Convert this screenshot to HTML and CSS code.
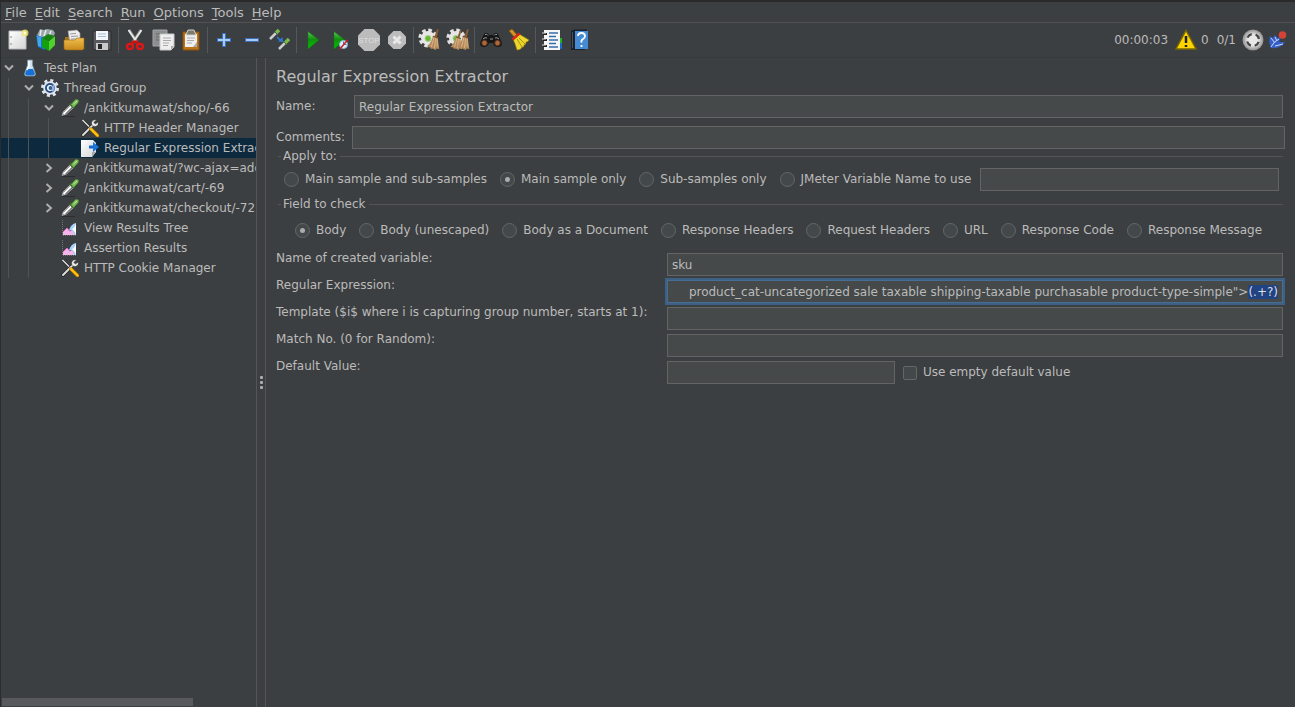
FILE: index.html
```html
<!DOCTYPE html>
<html lang="en">
<head>
<meta charset="utf-8">
<title>Regular Expression Extractor</title>
<link rel="stylesheet" href="styles.css">
</head>
<body>
<svg class="defs" aria-hidden="true">
  <defs>
    <linearGradient id="green" x1="0" y1="0" x2="0" y2="1"><stop offset="0" stop-color="#5cc85a"/><stop offset=".45" stop-color="#12900f"/><stop offset="1" stop-color="#00c800"/></linearGradient>
    <linearGradient id="paper" x1="0" y1="0" x2="1" y2="1"><stop offset="0" stop-color="#fff"/><stop offset="1" stop-color="#d4d4d4"/></linearGradient>
    <linearGradient id="gold" x1="0" y1="0" x2="0" y2="1"><stop offset="0" stop-color="#f0c050"/><stop offset="1" stop-color="#c98a1c"/></linearGradient>
    <radialGradient id="orb"><stop offset=".5" stop-color="#e8e8e8"/><stop offset="1" stop-color="#8d8d8d"/></radialGradient>
  </defs>
  <symbol id="down" viewBox="0 0 10 8"><path d="M1 1.500 5 5.500 9 1.500" fill="none" stroke="#adadad" stroke-width="2"/></symbol>
  <symbol id="right" viewBox="0 0 8 10"><path d="M1.500 1 6 5 1.500 9" fill="none" stroke="#adadad" stroke-width="2"/></symbol>
  <symbol id="pipette" viewBox="0 0 18 18">
    <path d="M1 17.500h13" stroke="#2b2d2e"/>
    <path d="M1 16.500 2.500 12.500 9.500 5.500 12.500 8.500 5.500 15Z" fill="#666" stroke="#bbb" stroke-width=".8"/>
    <path d="M2.500 15 10 7.500" stroke="#fff" stroke-width="1.800"/>
    <path d="M9 4.500 13.500 9" stroke="#356b25" stroke-width="2"/>
    <path d="M10 5.500 14.500.500q2.500-.5 3 1 .5 1.500-1 3L12.500 8.500Z" fill="#7abb55" stroke="#4a8c32" stroke-width=".6"/>
    <path d="m12.500 5 3.500-3" stroke="#c4e8a4"/>
  </symbol>
  <symbol id="tools" viewBox="0 0 18 18">
    <path d="M2 1.500 10 9.500" stroke="#222" stroke-width="2.600"/><path d="M1.500 1 10 9.500" stroke="#e2e2e2" stroke-width="1.400"/>
    <path d="m2 16 9-9" stroke="#222" stroke-width="3.400" stroke-linecap="round"/>
    <path d="m2 16 9-9" stroke="#ddd" stroke-width="2" stroke-linecap="round"/>
    <path d="M15.500 1q-4-1-5 2.500L11 7l3.500.5Q18 6.500 17 3l-2.500 2-1.800-1.500Z" fill="#eee" stroke="#333" stroke-width=".5"/>
    <path d="m10 10 7 7" stroke="#b97800" stroke-width="3.400" stroke-linecap="round"/><path d="m10 10 6.500 6.500" stroke="#ffc40c" stroke-width="2.200" stroke-linecap="round"/>
  </symbol>
  <symbol id="chart" viewBox="0 0 18 18">
    <path d="M1.500 1v15.500H16" fill="none" stroke="#707274" stroke-dasharray="1 1"/>
    <path d="M2 16v-3l4-4 3 3 3-1 3 5Z" fill="#f5b4ea"/><path d="M2 13 6 9l3 3.500" fill="none" stroke="#d76cbc"/>
    <path d="M8 11q2-6 7-7v12h-2l-1-4Z" fill="#a9d0fb"/><path d="M11 10q3-1 4-6v12q-1-4-4-6Z" fill="#fff"/>
  </symbol>
  <symbol id="gear" viewBox="0 0 24 24">
    <circle cx="10" cy="12" r="7.500" fill="none" stroke="#e3e3e3" stroke-width="4" stroke-dasharray="3.400 2.500"/><circle cx="10" cy="12" r="7" fill="#e6e6e6"/><circle cx="10" cy="12.500" r="3" fill="#69b832" stroke="#a9cf8a"/>
  </symbol>
  <symbol id="broom" viewBox="0 0 12 20">
    <path d="M9.500 0 11 .5 9 8 7 7Z" fill="#8c5c32"/><path d="M5.500 6.500 10 8l1.500 11-2.500-.5-1 1.500-3-1.500-1.500.5-.5-1.500-3-.5Q4.500 12 5.500 6.500Z" fill="#b58a5c"/>
    <path d="M6.500 8 4 17M8 9l-1 9M9.500 9v8" stroke="#e0bd8d" stroke-width=".8"/><path d="m5.500 7 5 1.500" stroke="#7a4f28"/>
  </symbol>
</svg>

<div class="app">
  <nav class="menubar" aria-label="Main menu">
    <button class="menu" type="button"><u>F</u>ile</button>
    <button class="menu" type="button"><u>E</u>dit</button>
    <button class="menu" type="button"><u>S</u>earch</button>
    <button class="menu" type="button"><u>R</u>un</button>
    <button class="menu" type="button"><u>O</u>ptions</button>
    <button class="menu" type="button"><u>T</u>ools</button>
    <button class="menu" type="button"><u>H</u>elp</button>
  </nav>

  <header class="toolbar">
    <button class="tool" type="button" aria-label="New"><svg viewBox="0 0 24 24"><path d="M3 3h17v18H3Z" fill="url(#paper)" stroke="#bbb"/><path d="M5 8v2M5 15v2" stroke="#888"/><circle cx="19" cy="5" r="3.500" fill="#f3e76c" opacity=".8"/><circle cx="19" cy="5" r="1.500" fill="#fffde0"/></svg></button>
    <button class="tool" type="button" aria-label="Templates"><svg viewBox="0 0 24 24"><path d="M3 7 6 1l4 1 3-1 6 1 2 3-2 5H5Z" fill="#9aa6ab"/><path d="M7 2 6 8M12 2l-2 6M17 3l-2 5" stroke="#e6eef0" stroke-width="1.500"/><path d="m2 7 9 3v12l-7-3Z" fill="#1676c8"/><path d="m3 8 4 1v10l-3-1Z" fill="#43a6ec"/><path d="m8 10 7 3v10l-7-4Z" fill="#16a010"/><path d="m15 13 6-5v9l-6 6Z" fill="#4fd32c"/><path d="m8 10 6-4 7 2-6 5Z" fill="#168211"/></svg></button>
    <button class="tool" type="button" aria-label="Open"><svg viewBox="0 0 24 24"><path d="M3 9h8l2 2h9v9H3Z" fill="#a87418"/><path d="m6 3 9-1 3 3v10H8Z" fill="#eee" stroke="#999" stroke-width=".7"/><path d="m8 6 6-.6M9 8.500l7-.5M9 11h7" stroke="#999"/><path d="M2 12h11l2-2h7v11l-2 1H4l-2-1Z" fill="url(#gold)" stroke="#9b6812" stroke-width=".6"/></svg></button>
    <button class="tool" type="button" aria-label="Save"><svg viewBox="0 0 24 24"><path d="M3 3h18v19H4l-1-1Z" fill="#56585d" stroke="#2c2d30"/><path d="M6 3h12v9H6Z" fill="#f4f7fa"/><path d="M8 6h8M8 8.500h8" stroke="#a5bdd6"/><path d="M6 15h12v7H6Z" fill="#c8c8c8"/><path d="M8 16h4v5H8Z" fill="#24262a"/></svg></button>
    <span class="sep"></span>
    <button class="tool" type="button" aria-label="Cut"><svg viewBox="0 0 24 24"><path d="m6 2 9 14M18 2 9 16" stroke="#909090" stroke-width="3"/><path d="m5.500 2 9 13M18.500 2l-9 13" stroke="#eee" stroke-width="1.500"/><path d="m12 13 4 3M12 13l-4 3" stroke="#c51212" stroke-width="3"/><ellipse cx="7" cy="18.500" rx="3" ry="2.500" fill="none" stroke="#e01515" stroke-width="2.300"/><ellipse cx="17" cy="18.500" rx="3" ry="2.500" fill="none" stroke="#e01515" stroke-width="2.300"/></svg></button>
    <button class="tool" type="button" aria-label="Copy"><svg viewBox="0 0 24 24"><path d="M2 2h14v16H2Z" fill="#8c8f90" stroke="#a2a4a5"/><path d="M5 6h8M5 9h7M5 12h5" stroke="#66696a"/><path d="M9 6h14v13l-3 3H9Z" fill="#eee" stroke="#c8c8c8"/><path d="M12 10h8M12 12.500h8M12 15h6M12 17.500h5" stroke="#aaa"/><path d="m20 22 3-4h-3Z" fill="#aaa"/></svg></button>
    <button class="tool" type="button" aria-label="Paste"><svg viewBox="0 0 24 24"><path d="M4 4h16v18H4Z" fill="#ba741a" stroke="#8a5109"/><path d="M6 6h12v13H6Z" fill="#efefef"/><path d="m14 19 4-5v5Z" fill="#aaa"/><path d="M8 10h8M8 12.500h7M8 15h5" stroke="#aaa"/><path d="M9 2h6l2 5H7Z" fill="#777b70" stroke="#d0d0c8"/></svg></button>
    <span class="sep"></span>
    <button class="tool" type="button" aria-label="Expand all"><svg viewBox="0 0 24 24"><path d="M12 5v14M5 12h14" stroke="#3b6fb8" stroke-width="4"/><path d="M12 6v12M6 12h12" stroke="#a8cbf4" stroke-width="2"/></svg></button>
    <button class="tool" type="button" aria-label="Collapse all"><svg viewBox="0 0 24 24"><path d="M5 12h14" stroke="#3b6fb8" stroke-width="4"/><path d="M6 12h12" stroke="#a8cbf4" stroke-width="2"/></svg></button>
    <button class="tool" type="button" aria-label="Toggle"><svg viewBox="0 0 24 24"><path d="m2 11 6-6M11 21l6-6" stroke="#ccc" stroke-width="2.500"/><path d="m8 5 3-3M17 15l4-4" stroke="#79b94e" stroke-width="3.500"/><path d="m7 4 3 3M15 13l4 4" stroke="#3e6b29"/><path d="m9 9 3 3" stroke="#2f79d8" stroke-width="1.600"/><path d="m14.500 9 .5 5-5-.5Z" fill="#2f79d8"/></svg></button>
    <span class="sep"></span>
    <button class="tool" type="button" aria-label="Start"><svg viewBox="0 0 24 24"><path d="M7 3.500 18 12 7 21Z" fill="url(#green)" stroke="#0b750b" stroke-width=".5"/></svg></button>
    <button class="tool" type="button" aria-label="Start no pauses"><svg viewBox="0 0 24 24"><path d="M5 3.500 16 12 5 21Z" fill="url(#green)" stroke="#0b750b" stroke-width=".5"/><circle cx="14.500" cy="16.500" r="4" fill="#e2efff" stroke="#8fb2d7"/><path d="M14.500 16.500v-3M14.500 16.500h3" stroke="#3d75b5"/><path d="m11 21 7.500-9" stroke="#d02020" stroke-width="1.500"/></svg></button>
    <button class="tool" type="button" aria-label="Stop" disabled><svg viewBox="0 0 24 24"><path d="M7.500 1h9L23 7.500v9L16.500 23h-9L1 16.500v-9Z" fill="#bcbcbc"/><text x="12" y="15" class="stop" text-anchor="middle">STOP</text></svg></button>
    <button class="tool" type="button" aria-label="Shutdown" disabled><svg viewBox="0 0 24 24"><path d="M8.500 3h7L21 8.500v7L15.500 21h-7L3 15.500v-7Z" fill="#bcbcbc"/><path d="m8.500 8.500 7 7M15.500 8.500l-7 7" stroke="#e8e8e8" stroke-width="3"/></svg></button>
    <span class="sep"></span>
    <button class="tool" type="button" aria-label="Clear"><svg viewBox="0 0 24 24"><use href="#gear" x="0" y="-2" width="24" height="24"/><use href="#broom" x="9" y="1" width="13" height="21"/></svg></button>
    <button class="tool" type="button" aria-label="Clear all"><svg viewBox="0 0 24 24"><use href="#gear" x="0" y="-2" width="24" height="24"/><use href="#broom" x="4" y="2" width="13" height="20"/><use href="#broom" x="11" y="1" width="13" height="21"/></svg></button>
    <span class="sep"></span>
    <button class="tool" type="button" aria-label="Search tree"><svg viewBox="0 0 24 24"><path d="M5 6q3-3 5 1h4q2-4 5-1l4 9q0 4-4 4t-5-4h-4q-1 4-5 4t-4-4Z" fill="#171717"/><path d="M6 6.500q2-1 3 1M15 7.500q1-2 3-1M11 11h3M4 11q2-2 4-1M16 10q2-1 4 1" fill="none" stroke="#999"/><circle cx="5.500" cy="15" r="2.700" fill="#b0673a" stroke="#5f3723"/><circle cx="18.500" cy="15" r="2.700" fill="#b0673a" stroke="#5f3723"/></svg></button>
    <button class="tool" type="button" aria-label="Reset search"><svg viewBox="0 0 24 24"><path d="m2 3 3-2 6 7-3 2Z" fill="#d29322" stroke="#7d5212" stroke-width=".7"/><path d="m6 11 6-5 10 6q-1 2-3 2 0 3-2 3 0 3-2 2-1 3-5 3-2-7-4-11Z" fill="#ebd62e" stroke="#9b820b" stroke-width=".6"/><path d="m10 11 5 8M12 10l6 6" stroke="#aa8f0d"/><path d="m5.500 11.500 7-6" stroke="#d52518" stroke-width="2.500"/></svg></button>
    <span class="sep"></span>
    <button class="tool" type="button" aria-label="Function helper"><svg viewBox="0 0 24 24"><path d="M20 10h2v6h-2Z" fill="#18b81c"/><path d="M20 15h2v6h-2Z" fill="#1b68cb"/><path d="M4 2h16v20H4Z" fill="#f5f5f5"/><path d="M3 6h4M3 12h4M3 18h4" stroke="#222" stroke-width="2"/><path d="M2 5h4M2 11h4M2 17h4" stroke="#ddd"/><path d="M9 5h9M9 8.500h7M9 12h9M9 15.500h7M9 19h9" stroke="#376baa" stroke-width="1.300"/></svg></button>
    <button class="tool" type="button" aria-label="Help"><svg viewBox="0 0 24 24"><path d="M3 3 6 1.500h13V20l-3 2H3Z" fill="#1b222a"/><path d="M7 3h13v18H7Z" fill="#458bd4"/><path d="M4.500 4v16" stroke="#47505a"/><path d="M10 8q0-3 3.500-3t3.500 3q0 2-2 3t-1.500 3.500M13.500 17v2" fill="none" stroke="#fff" stroke-width="1.800"/></svg></button>

    <div class="status">
      <span class="time">00:00:03</span>
      <button class="warning" type="button" aria-label="Log errors"><svg viewBox="0 0 24 24"><path d="M12 2.500 22 21H2Z" fill="#ffd400" stroke="#7a6900" stroke-width="1.400"/><path d="M12 8v7M12 17v2" stroke="#222" stroke-width="2.500"/></svg></button>
      <span class="errors">0</span>
      <span class="threads">0/1</span>
      <svg class="orb" viewBox="0 0 24 24"><circle cx="12" cy="12" r="10.500" fill="url(#orb)"/><circle cx="12" cy="12" r="6" fill="none" stroke="#444" stroke-width="2.200" stroke-dasharray="5.400 4.024" stroke-dashoffset="-2"/></svg>
      <svg class="feather" viewBox="0 0 18 18"><path d="M2 17Q-1 11 1 5l3 2 2-3 3 3 3-1-2 5h6q-4 7-14 6Z" fill="#345fc8"/><path d="M2 16q3-6 8-8M2 7l4 5M6 15l8-2M6 6l2 4" fill="none" stroke="#c9d9ff"/><circle cx="13.500" cy="4" r="3.800" fill="#d54336"/></svg>
    </div>
  </header>

  <main class="workspace">
    <aside class="sidebar">
      <ul class="tree">
        <li class="row"><span class="slot"><svg class="down"><use href="#down"/></svg></span><svg class="icon" viewBox="0 0 18 18"><path d="M6.500 1h5v5l3 9q0 2-2 2h-7q-2 0-2-2l3-9Z" fill="#cfe3f4" stroke="#7f93a6" stroke-width=".7"/><path d="M6 10h6l2 5-1.500 1.500h-7L4 15Z" fill="#1670d5"/><path d="M8 2v5l-2 4" fill="none" stroke="#fff" stroke-width="1.400"/></svg><span class="name">Test Plan</span></li>
        <li class="row"><span class="slot guide"></span><span class="slot"><svg class="down"><use href="#down"/></svg></span><svg class="icon" viewBox="0 0 18 18"><circle cx="9" cy="9" r="7.500" fill="none" stroke="#dfe5ee" stroke-width="3" stroke-dasharray="3 2.890"/><circle cx="9" cy="9" r="6.800" fill="#dfe5ee"/><circle cx="9" cy="9" r="4" fill="#fff" stroke="#2b4f87" stroke-width="2"/><path d="M12 6.500a4 4 0 0 1-1 5.500" fill="none" stroke="#8fb4e4" stroke-width="2"/><circle cx="9.500" cy="9" r="2" fill="#355e9b"/></svg><span class="name">Thread Group</span></li>
        <li class="row"><span class="slot guide"></span><span class="slot guide"></span><span class="slot"><svg class="down"><use href="#down"/></svg></span><svg class="icon"><use href="#pipette"/></svg><span class="name">/ankitkumawat/shop/-66</span></li>
        <li class="row"><span class="slot guide"></span><span class="slot guide"></span><span class="slot guide"></span><span class="slot"></span><svg class="icon"><use href="#tools"/></svg><span class="name">HTTP Header Manager</span></li>
        <li class="row selected"><span class="slot guide"></span><span class="slot guide"></span><span class="slot guide"></span><span class="slot"></span><svg class="icon" viewBox="0 0 18 18"><path d="M0 1h12l3 3v9l-4 5H0Z" fill="url(#paper)"/><path d="m15 13-4 5v-5Z" fill="#aaa"/><path d="M8 8h5" stroke="#1768c8" stroke-width="3"/><path d="m12 3 6 5-6 5Z" fill="#1b74dc"/></svg><span class="name">Regular Expression Extractor</span></li>
        <li class="row"><span class="slot guide"></span><span class="slot guide"></span><span class="slot"><svg class="right"><use href="#right"/></svg></span><svg class="icon"><use href="#pipette"/></svg><span class="name">/ankitkumawat/?wc-ajax=add</span></li>
        <li class="row"><span class="slot guide"></span><span class="slot guide"></span><span class="slot"><svg class="right"><use href="#right"/></svg></span><svg class="icon"><use href="#pipette"/></svg><span class="name">/ankitkumawat/cart/-69</span></li>
        <li class="row"><span class="slot guide"></span><span class="slot guide"></span><span class="slot"><svg class="right"><use href="#right"/></svg></span><svg class="icon"><use href="#pipette"/></svg><span class="name">/ankitkumawat/checkout/-72</span></li>
        <li class="row"><span class="slot guide"></span><span class="slot guide"></span><span class="slot"></span><svg class="icon"><use href="#chart"/></svg><span class="name">View Results Tree</span></li>
        <li class="row"><span class="slot guide"></span><span class="slot guide"></span><span class="slot"></span><svg class="icon"><use href="#chart"/></svg><span class="name">Assertion Results</span></li>
        <li class="row"><span class="slot guide"></span><span class="slot guide"></span><span class="slot"></span><svg class="icon"><use href="#tools"/></svg><span class="name">HTTP Cookie Manager</span></li>
      </ul>
      <div class="scrollbar"></div>
    </aside>
    <div class="splitter"><i class="dot"></i><i class="dot"></i><i class="dot"></i></div>

    <form class="editor">
      <h1 class="title">Regular Expression Extractor</h1>
      <div class="line name-line"><label class="name-label" for="name">Name:</label><input class="field" id="name" type="text" value="Regular Expression Extractor"></div>
      <div class="line comments-line"><label for="comments">Comments:</label><input class="field" id="comments" type="text"></div>

      <fieldset class="group">
        <legend>Apply to:</legend>
        <div class="options apply">
          <label class="option"><input type="radio" name="scope">Main sample and sub-samples</label>
          <label class="option"><input type="radio" name="scope" checked>Main sample only</label>
          <label class="option"><input type="radio" name="scope">Sub-samples only</label>
          <label class="option"><input type="radio" name="scope">JMeter Variable Name to use</label>
          <input class="field variable" type="text" aria-label="JMeter Variable Name">
        </div>
      </fieldset>
      <fieldset class="group">
        <legend>Field to check</legend>
        <div class="options check">
          <label class="option"><input type="radio" name="target" checked>Body</label>
          <label class="option"><input type="radio" name="target">Body (unescaped)</label>
          <label class="option"><input type="radio" name="target">Body as a Document</label>
          <label class="option"><input type="radio" name="target">Response Headers</label>
          <label class="option"><input type="radio" name="target">Request Headers</label>
          <label class="option"><input type="radio" name="target">URL</label>
          <label class="option"><input type="radio" name="target">Response Code</label>
          <label class="option"><input type="radio" name="target">Response Message</label>
        </div>
      </fieldset>

      <div class="params">
        <label for="var">Name of created variable:</label><input class="field" id="var" type="text" value="sku">
        <label for="regex">Regular Expression:</label><input class="field" id="regex" type="text" spellcheck="false" value="product_cat-uncategorized sale taxable shipping-taxable purchasable product-type-simple&quot;&gt;(.+?)">
        <label for="template">Template ($i$ where i is capturing group number, starts at 1):</label><input class="field" id="template" type="text">
        <label for="match">Match No. (0 for Random):</label><input class="field" id="match" type="text">
        <label for="default">Default Value:</label>
        <div class="default"><input class="field" id="default" type="text"><label class="option"><input type="checkbox">Use empty default value</label></div>
      </div>
    </form>
  </main>
</div>
<script src="app.js"></script>
</body>
</html>
```
FILE: styles.css
```css
* { box-sizing: border-box; }
body {
  margin: 0;
  background: #3c3f41;
  color: #bbb;
  font: 12px/15px "DejaVu Sans", sans-serif;
}
button, input { font: inherit; color: inherit; }
button { border: 0; padding: 0; background: none; }
svg { display: block; flex: none; }
.defs { position: absolute; width: 0; height: 0; }

.app {
  display: flex;
  flex-direction: column;
  height: 100vh;
  border-top: 2px solid #2b2a2b;
  border-left: 1px solid #2a2c2d;
}

.menubar {
  display: flex;
  height: 21px;
  border-bottom: 1px solid #515151;
  font-size: 13px;
}
.menu { padding: 0 4px; white-space: nowrap; }
.menu u { text-underline-offset: 2px; }

.toolbar {
  display: flex;
  align-items: center;
  height: 35px;
  padding: 0 8px 0 3px;
  border-bottom: 1px solid #37393b;
}
.tool { width: 28px; height: 28px; padding: 2px; }
.tool svg { width: 24px; height: 24px; }
.stop { fill: #dedede; font: 8px "Liberation Sans", sans-serif; }
.sep { width: 1px; height: 26px; margin: 0 2px; background: #55585a; }
.status { display: flex; align-items: center; margin-left: auto; }
.warning { margin: 0 3px 0 6px; }
.warning svg, .orb { width: 24px; height: 24px; }
.threads { margin: 0 5px 0 8px; }
.feather { width: 18px; height: 18px; margin-left: 4px; }

.workspace { display: flex; flex: 1; min-height: 0; }
.sidebar {
  display: flex;
  flex-direction: column;
  width: 256px;
  flex: none;
  overflow: hidden;
  border-right: 1px solid #555;
}
.tree { flex: 1; margin: 0; padding: 0; list-style: none; }
.row { display: flex; align-items: center; height: 20px; }
.selected { background: #0d293e; }
.slot {
  display: flex;
  align-items: center;
  width: 20px;
  height: 20px;
  padding-left: 3px;
  flex: none;
}
.guide::before { content: ""; width: 1px; height: 20px; margin-left: 4px; background: #505355; }
.down { width: 10px; height: 8px; }
.right { width: 8px; height: 10px; margin-left: 1px; }
.icon { width: 18px; height: 18px; }
.name { margin-left: 5px; white-space: nowrap; }
.scrollbar { width: 75%; height: 8px; margin: 0 1px 1px; background: #58595a; }

.splitter {
  display: flex;
  flex-direction: column;
  align-items: center;
  justify-content: center;
  gap: 2px;
  width: 9px;
  flex: none;
  border-right: 1px solid #555;
}
.dot { width: 3px; height: 3px; border-radius: 1px; background: #adadad; }

.editor { flex: 1; min-width: 0; padding: 8px 12px 0 10px; }
.title { margin: 0; font-size: 16px; line-height: 22px; font-weight: normal; }
.line { display: flex; align-items: center; }
.field {
  height: 23px;
  min-width: 0;
  padding: 0 4px;
  flex: 1;
  border: 1px solid #646464;
  border-radius: 0;
  outline: 0;
  background: #45494a;
}
.name-line { margin-top: 7px; }
.name-label { width: 78px; }
.comments-line { gap: 7px; margin: 8px -2px 0 0; }

.group {
  min-width: 0;
  margin: 0 0 0 2px;
  padding: 0 4px 0 3px;
  border: 0;
  border-top: 1px solid #555;
}
.group + .group { margin-top: 6px; }
legend { padding: 0 3px 0 2px; }
.options { display: flex; align-items: center; gap: 13px; }
.apply { padding: 4px 0 0 3px; }
.check { padding: 11px 0 0 14px; }
.option { display: flex; align-items: center; gap: 6px; white-space: nowrap; }
.variable { margin-left: -4px; }
[type="radio"], [type="checkbox"] {
  appearance: none;
  display: grid;
  place-items: center;
  width: 15px;
  height: 15px;
  margin: 0;
  border: 1px solid #646667;
  background: #43494a;
}
[type="radio"] { border-radius: 50%; }
[type="radio"]:checked::after { content: ""; width: 5px; height: 5px; border-radius: 50%; background: #ababab; }
[type="checkbox"] { width: 14px; height: 14px; border-radius: 2px; }

.params {
  display: grid;
  grid-template-columns: 388px 1fr;
  grid-auto-rows: 27px;
  column-gap: 3px;
  align-items: start;
  margin-top: 13px;
}
.params > label { white-space: nowrap; }
.params > .field, .default { margin-top: 2px; }
.default { display: flex; align-items: center; gap: 8px; }
.default .field { flex: 0 0 37%; }
#regex { text-align: right; }
#regex:focus { border-color: #466d94; box-shadow: 0 0 0 2px #3d6185; }
.field::selection { background: #214283; color: #ddd; }
```
FILE: app.js
```js
const regex = document.getElementById("regex");
const group = regex.value.indexOf("(.+?)");
regex.focus();
regex.setSelectionRange(group, regex.value.length);
regex.scrollLeft = regex.scrollWidth;
```
